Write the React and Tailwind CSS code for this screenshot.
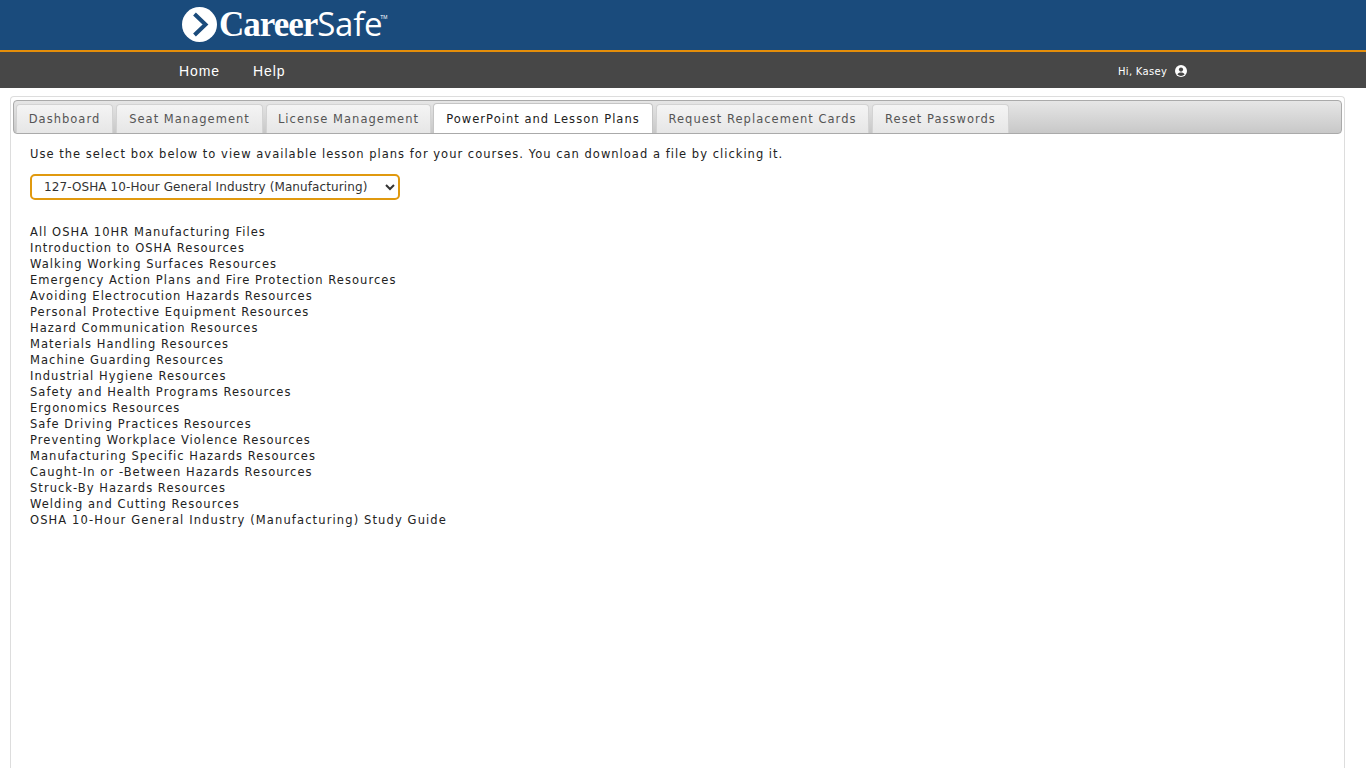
import React from 'react';

const tabs = [
  { label: 'Dashboard', width: 'w-[97px]' },
  { label: 'Seat Management', width: 'w-[147px]' },
  { label: 'License Management', width: 'w-[165px]' },
  { label: 'PowerPoint and Lesson Plans', width: 'w-[220px] -ml-px', active: true },
  { label: 'Request Replacement Cards', width: 'w-[213px]' },
  { label: 'Reset Passwords', width: 'w-[137px]' },
];

const files = [
  'All OSHA 10HR Manufacturing Files',
  'Introduction to OSHA Resources',
  'Walking Working Surfaces Resources',
  'Emergency Action Plans and Fire Protection Resources',
  'Avoiding Electrocution Hazards Resources',
  'Personal Protective Equipment Resources',
  'Hazard Communication Resources',
  'Materials Handling Resources',
  'Machine Guarding Resources',
  'Industrial Hygiene Resources',
  'Safety and Health Programs Resources',
  'Ergonomics Resources',
  'Safe Driving Practices Resources',
  'Preventing Workplace Violence Resources',
  'Manufacturing Specific Hazards Resources',
  'Caught-In or -Between Hazards Resources',
  'Struck-By Hazards Resources',
  'Welding and Cutting Resources',
];

function Logo() {
  return (
    <div className="flex items-center h-[50px]">
      <svg width="35" height="35" viewBox="0 0 35 35" className="mt-[-1px]">
        <circle cx="17.5" cy="17.5" r="17.5" fill="#fff" />
        <path d="M12.5 7 L23.5 17.5 L12.5 28" fill="none" stroke="#1a4b7c" strokeWidth="4" />
      </svg>
      <span className="ml-[2px] mt-[-1px] leading-none text-white whitespace-nowrap">
        <span className="font-bold font-['Liberation_Serif',serif] text-[35px] tracking-[-1px]">Career</span>
        <span className="font-['Open_Sans',sans-serif] text-[33px] tracking-[-0.3px]">Safe</span>
      </span>
      <span className="self-start mt-[15px] -ml-[2px] text-[5px] leading-none text-white font-['Liberation_Sans',sans-serif]">TM</span>
    </div>
  );
}

function UserIcon() {
  return (
    <svg width="12" height="12" viewBox="0 0 12 12">
      <circle cx="6" cy="6" r="6" fill="#fff" />
      <circle cx="6" cy="4.6" r="2.1" fill="#474747" />
      <path d="M2.4 9.6 C3 7.9 4.4 7.5 6 7.5 C7.6 7.5 9 7.9 9.6 9.6 C8.6 10.5 7.4 11 6 11 C4.6 11 3.4 10.5 2.4 9.6 Z" fill="#474747" />
    </svg>
  );
}

export default function App() {
  return (
    <div className="min-h-[768px] bg-white font-['DejaVu_Sans',sans-serif] text-[11.5px] text-[#222]">
      <div className="h-[52px] bg-[#1a4b7c] border-b-2 border-[#e58e0a] pl-[182px]">
        <Logo />
      </div>
      <div className="h-[36px] bg-[#474747] flex items-center pt-[2px] pl-[179px] text-white">
        <a className="w-[41px] text-[14px] tracking-[0.9px] font-['Liberation_Sans',sans-serif]">Home</a>
        <a className="ml-[33px] w-[32px] text-[14px] tracking-[0.9px] font-['Liberation_Sans',sans-serif]">Help</a>
        <span className="ml-[833px] w-[50px] whitespace-nowrap text-[10px] tracking-[0.3px]">Hi, Kasey</span>
        <span className="ml-[7px]"><UserIcon /></span>
      </div>
      <div className="mx-[10px] mt-[8px] w-[1335px] h-[672px] border border-b-0 border-[#ddd] rounded-t-[4px] pt-[3px] px-[2px]">
        <ul className="h-[34px] flex items-end gap-[3px] pl-[2px] rounded-[4px] border border-[#aaa] bg-gradient-to-b from-[#e6e6e6] to-[#c8c8c8]">
          {tabs.map(t => (
            <li
              key={t.label}
              className={`${t.width} shrink-0 flex items-center justify-center rounded-t-[4px] border border-b-0 tracking-[1.02px] ${
                t.active
                  ? 'h-[30px] pt-[2px] border-[#c5c5c5] bg-white text-[#212121]'
                  : 'h-[29px] pt-px border-[#d3d3d3] bg-gradient-to-b from-[#f4f4f4] to-[#e6e6e6] text-[#555]'
              }`}
            >
              {t.label}
            </li>
          ))}
        </ul>
        <div className="pl-[17px] pt-[12px]">
          <p className="leading-[16px] tracking-[1.01px]">
            Use the select box below to view available lesson plans for your courses. You can download a file by clicking it.
          </p>
          <select
            defaultValue="127"
            className="block mt-[12px] w-[370px] h-[26px] pl-[8px] bg-white border-2 border-[#e0990f] rounded-[5px] text-[12px] tracking-[0.1px] text-[#333] font-['DejaVu_Sans',sans-serif]"
          >
            <option value="127">127-OSHA 10-Hour General Industry (Manufacturing)</option>
          </select>
          <div className="mt-[24px]">
            {files.map(f => (
              <div key={f} className="h-[16px] leading-[16px] tracking-[1.04px] text-[#222]">{f}</div>
            ))}
            <div className="h-[16px] leading-[16px] tracking-[1.12px] text-[#222]">OSHA 10-Hour General Industry (Manufacturing) Study Guide</div>
          </div>
        </div>
      </div>
    </div>
  );
}
